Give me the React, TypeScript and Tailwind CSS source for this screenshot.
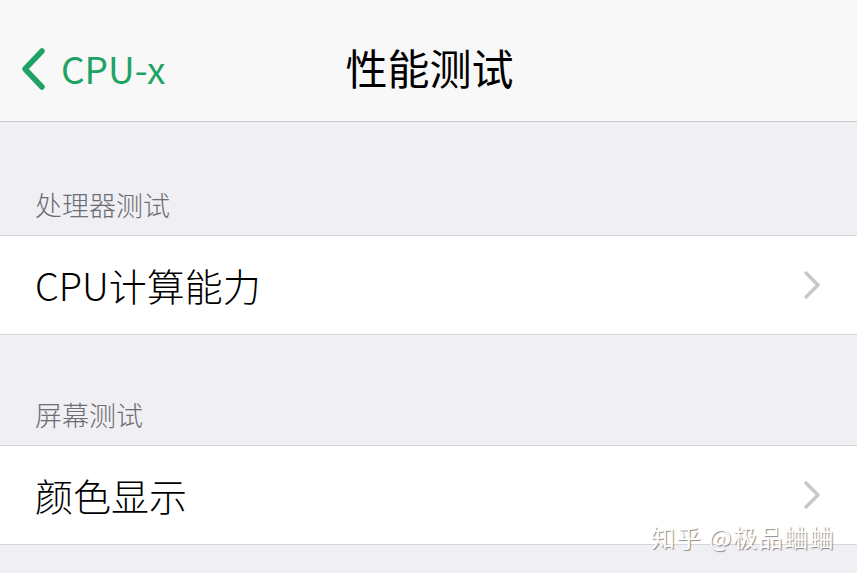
const font = { fontFamily: '"Noto Sans CJK SC", "Noto Sans", sans-serif' };

function Chevron() {
  return (
    <svg width="18" height="30" viewBox="0 0 18 30" className="shrink-0">
      <path d="M3 3 L15 15 L3 27" fill="none" stroke="#c7c7cc" strokeWidth="3.5" strokeLinecap="round" strokeLinejoin="round" />
    </svg>
  );
}

function Row({ label }: { label: string }) {
  return (
    <div className="h-[100px] bg-white border-y border-[#d6d6da] flex items-center justify-between pl-[35px] pr-[36px]">
      <span className="text-[38px] text-black leading-none font-light">{label}</span>
      <Chevron />
    </div>
  );
}

function SectionHeader({ title, height }: { title: string; height: string }) {
  return (
    <div className={`${height} flex items-end pl-[35px] pb-[17px]`}>
      <span className="text-[27px] text-[#6d6d72] leading-none font-light">{title}</span>
    </div>
  );
}

export default function App() {
  return (
    <div className="w-[857px] h-[573px] overflow-hidden bg-[#efeff4] relative" style={font}>
      {/* nav bar */}
      <div className="h-[122px] bg-[#f8f8f8] border-b border-[#c8c7cc] relative flex items-center">
        <div className="flex items-center pl-[20px] gap-[14px] text-[#1fa365] mt-[16px]">
          <svg width="27" height="44" viewBox="0 0 27 44">
            <path d="M22 4 L5 22 L22 40" fill="none" stroke="#1fa365" strokeWidth="5.5" strokeLinecap="round" strokeLinejoin="round" />
          </svg>
          <span className="text-[37px] leading-none">CPU-x</span>
        </div>
        <div className="absolute inset-x-0 top-[46px] flex justify-center">
          <span className="text-[42px] leading-none text-black pl-[2px]">性能测试</span>
        </div>
      </div>

      <SectionHeader title="处理器测试" height="h-[113px]" />
      <Row label="CPU计算能力" />
      <SectionHeader title="屏幕测试" height="h-[110px]" />
      <Row label="颜色显示" />

      {/* watermark */}
      <div className="absolute right-[22px] top-[525px] text-[24px] leading-none text-white tracking-[1.5px] [text-shadow:1px_1px_1px_rgba(0,0,0,0.45)]">
        知乎 @极品蛐蛐
      </div>
    </div>
  );
}
